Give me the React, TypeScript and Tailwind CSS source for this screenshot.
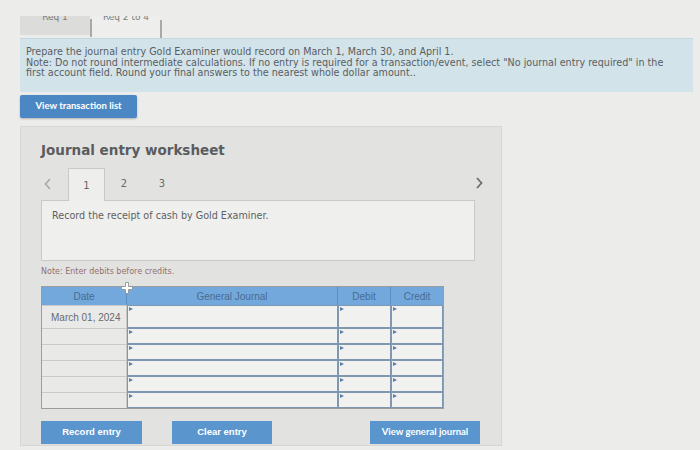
import React from "react";

const rows = [
  { date: "March 01, 2024", h: "h-[23px]" },
  { date: "", h: "h-[16px]" },
  { date: "", h: "h-[16px]" },
  { date: "", h: "h-[16px]" },
  { date: "", h: "h-[16px]" },
  { date: "", h: "h-[16px]" },
];

function Marker() {
  return (
    <span className="absolute left-[1px] top-[1px] w-0 h-0 border-t-[2px] border-b-[2px] border-l-[4px] border-t-transparent border-b-transparent border-l-[#5b7fa8]" />
  );
}

function InputCell({ className }: { className?: string }) {
  return (
    <div className={"relative bg-[#f1f1ef] border-[1.5px] border-[#7f97b0] " + (className || "")}>
      <Marker />
    </div>
  );
}

export default function App() {
  return (
    <div
      className="w-[700px] h-[450px] overflow-hidden bg-[#ecedeb] pl-[20px]"
      style={{ fontFamily: '"DejaVu Sans", Verdana, sans-serif' }}
    >
      {/* top tabs */}
      <div className="h-[16px]" />
      <div className="flex h-[22px] text-[9px] text-[#7a7a7a]">
        <div className="w-[70px] h-[19px] bg-[#dcdcda] overflow-hidden flex justify-center">
          <span className="-mt-[5px] leading-[12px]">Req 1</span>
        </div>
        <div className="w-[2px] h-[18px] mt-[3px] bg-[#a9a9a7]" />
        <div className="w-[68px] h-[22px] bg-[#eeeeec] overflow-hidden flex justify-center">
          <span className="-mt-[5px] leading-[12px]">Req 2 to 4</span>
        </div>
        <div className="w-[2px] h-[18px] mt-[4px] bg-[#a9a9a7]" />
      </div>

      {/* instructions */}
      <div className="w-[673px] h-[54px] bg-[#d3e3ea] border-t border-[#c4d6df] pl-[6px] pr-[20px] pt-[8px] text-[9.6px] leading-[10.6px] text-[#5a5e62]">
        <div>Prepare the journal entry Gold Examiner would record on March 1, March 30, and April 1.</div>
        <div>
          Note: Do not round intermediate calculations. If no entry is required for a transaction/event, select "No journal entry required" in the first account field. Round your final answers to the nearest whole dollar amount..
        </div>
      </div>

      {/* view transaction list */}
      <div className="mt-[3px] w-[117px] h-[23px] bg-[#4b88c3] rounded-[2px] shadow-[0_1px_2px_rgba(0,0,0,0.25)] flex items-center justify-center text-white text-[9.5px] font-bold" style={{ fontFamily: "Lato, sans-serif" }}>
        View transaction list
      </div>

      {/* worksheet panel */}
      <div className="mt-[8px] w-[482px] h-[320px] bg-[#e2e3e1] border border-[#d6d7d5] pl-[20px] pt-[14px]">
        <div className="text-[13.5px] font-bold text-[#5a5c5e] leading-[18px]">Journal entry worksheet</div>

        <div className="mt-[8px] w-[434px] flex items-end h-[33px] relative">
          <div className="w-[27px] h-full flex items-center pl-[3px]">
            <svg width="8" height="12" viewBox="0 0 8 12">
              <polyline points="6,1 1.5,6 6,11" fill="none" stroke="#a8a9ab" strokeWidth="1.6" />
            </svg>
          </div>
          <div className="w-[37px] h-[33px] bg-[#eeeeec] border border-b-0 border-[#c9cac8] flex items-center justify-center text-[10px] text-[#666] -mb-[1px] relative z-10">
            1
          </div>
          <div className="w-[38px] h-full flex items-center justify-center text-[10px] text-[#6a6a6a]">2</div>
          <div className="w-[38px] h-full flex items-center justify-center text-[10px] text-[#6a6a6a]">3</div>
          <div className="flex-1" />
          <div className="absolute right-[-8px] top-[10px]">
            <svg width="8" height="12" viewBox="0 0 8 12">
              <polyline points="2,1 6.5,6 2,11" fill="none" stroke="#6c6d70" strokeWidth="1.8" />
            </svg>
          </div>
        </div>

        <div className="w-[434px] h-[61px] bg-[#efefed] border border-[#c9cac8] pl-[10px] pt-[8px] text-[9.6px] text-[#5e5f61]">
          Record the receipt of cash by Gold Examiner.
        </div>

        <div className="mt-[5px] text-[8px] text-[#946e6c]">Note: Enter debits before credits.</div>

        {/* table */}
        <div className="mt-[8px] w-[403px] border border-[#9a9c9e] relative" style={{ fontFamily: '"Liberation Sans", Arial, sans-serif' }}>
          <div className="grid grid-cols-[85px_211px_53px_52px] h-[18px] bg-[#72a8dc] text-[10px] text-[#4a6b8f]">
            <div className="flex items-center justify-center border-r border-[#5e8fc0]">Date</div>
            <div className="flex items-center justify-center border-r border-[#5e8fc0]">General Journal</div>
            <div className="flex items-center justify-center border-r border-[#5e8fc0]">Debit</div>
            <div className="flex items-center justify-center">Credit</div>
          </div>
          {rows.map((r, i) => (
            <div key={i} className={"grid grid-cols-[85px_211px_53px_52px] " + r.h}>
              <div className="bg-[#e9e9e7] border-t border-r border-[#c9cac8] flex items-center pl-[9px] text-[10px] text-[#6a6b6d]">
                {r.date}
              </div>
              <InputCell />
              <InputCell />
              <InputCell />
            </div>
          ))}
          <div className="absolute left-[79px] top-[-5px]">
            <svg width="12" height="12" viewBox="0 0 12 12">
              <path d="M4.5 0.5h3v4h4v3h-4v4h-3v-4h-4v-3h4z" fill="#ffffff" stroke="#8a8a8a" strokeWidth="0.8" />
            </svg>
          </div>
        </div>

        {/* buttons */}
        <div className="mt-[12px] flex w-[439px]" style={{ fontFamily: '"Liberation Sans", Arial, sans-serif' }}>
          <div className="w-[101px] h-[23px] bg-[#5b95cd] flex items-center justify-center text-white text-[9.5px] font-bold">Record entry</div>
          <div className="ml-[30px] w-[100px] h-[23px] bg-[#5b95cd] flex items-center justify-center text-white text-[9.5px] font-bold">Clear entry</div>
          <div className="flex-1" />
          <div className="w-[110px] h-[23px] bg-[#5b95cd] flex items-center justify-center text-white text-[9.5px] font-bold" style={{ fontFamily: "Lato, sans-serif" }}>View general journal</div>
        </div>
      </div>
    </div>
  );
}
